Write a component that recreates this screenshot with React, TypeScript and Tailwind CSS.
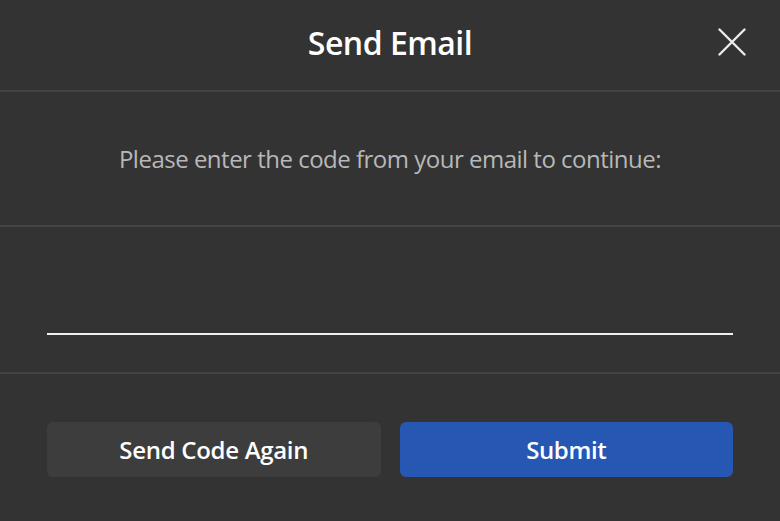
export default function App() {
  return (
    <div
      className="w-[780px] h-[521px] bg-[#333333] flex flex-col text-white overflow-hidden"
      style={{ fontFamily: '"Open Sans", "Noto Sans", sans-serif' }}
    >
      {/* Header */}
      <div className="h-[92px] shrink-0 flex items-center justify-center relative border-b-2 border-[#444444] pb-[4px]">
        <h1 className="text-[32px] font-semibold tracking-[-0.5px] leading-none">Send Email</h1>
        <button className="absolute right-[34px] top-[28px] w-[28px] h-[28px] flex items-center justify-center">
          <svg width="28" height="28" viewBox="0 0 28 28" fill="none" stroke="#ececec" strokeWidth="2.4" strokeLinecap="round">
            <path d="M1.5 1.5 L26.5 26.5 M26.5 1.5 L1.5 26.5" />
          </svg>
        </button>
      </div>

      {/* Message */}
      <div className="h-[135px] shrink-0 flex items-center justify-center border-b-2 border-[#444444]">
        <p className="text-[24px] text-[#b8b8b8] tracking-[-0.5px]">
          Please enter the code from your email to continue:
        </p>
      </div>

      {/* Code input */}
      <div className="h-[147px] shrink-0 px-[47px] flex flex-col justify-end pb-[37px] border-b-2 border-[#444444]">
        <input
          type="text"
          className="w-full bg-transparent border-b-2 border-[#f0f0f0] outline-none text-[22px] text-white pb-1"
        />
      </div>

      {/* Actions */}
      <div className="flex-1 px-[47px] pt-[48px] flex gap-[19px]">
        <button className="flex-1 h-[55px] rounded-md bg-[#3d3d3d] text-[24px] font-semibold tracking-[-0.3px]">
          Send Code Again
        </button>
        <button className="flex-1 h-[55px] rounded-md bg-[#2557b3] text-[24px] font-semibold tracking-[-0.4px]">
          Submit
        </button>
      </div>
    </div>
  );
}
